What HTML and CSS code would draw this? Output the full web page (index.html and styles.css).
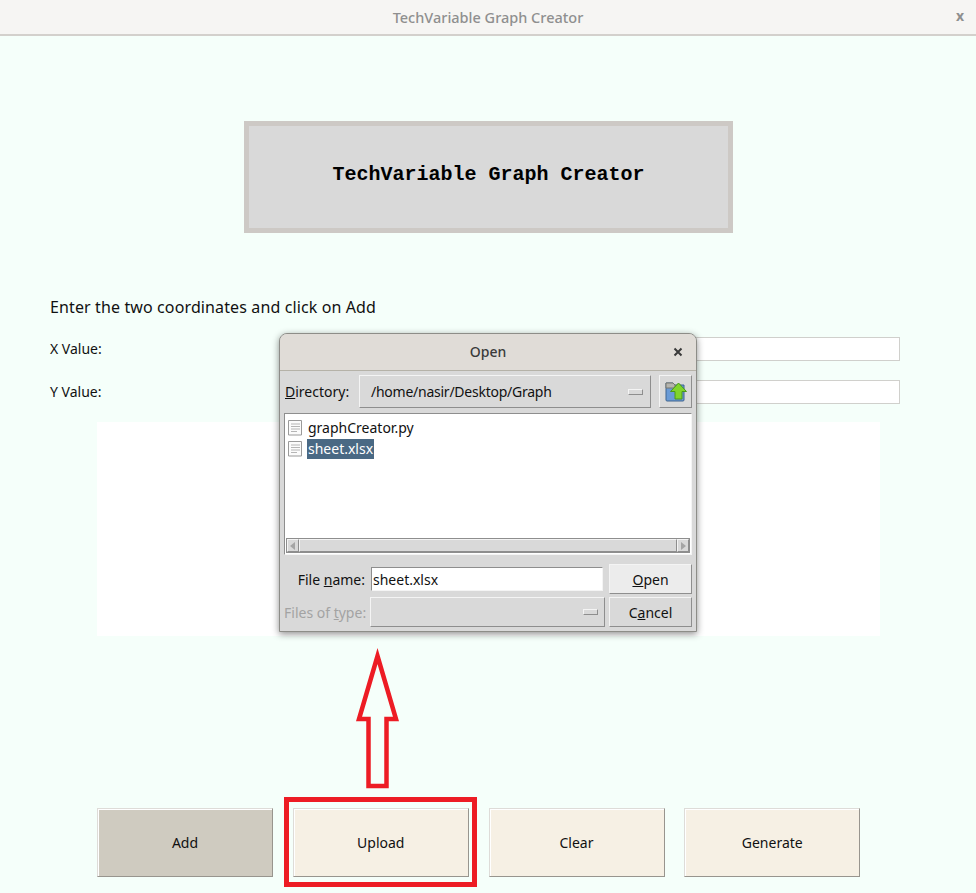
FILE: index.html
```html
<!DOCTYPE html>
<html lang="en">
<head>
    <meta charset="UTF-8">
    <meta name="viewport" content="width=device-width, initial-scale=1.0">
    <title>TechVariable Graph Creator</title>
    <link rel="stylesheet" href="styles.css">
</head>
<body>
    <div class="titlebar">
        <span class="titlebar-text">TechVariable Graph Creator</span>
        <span class="titlebar-close">x</span>
    </div>
    <div class="app">
        <div class="banner">TechVariable Graph Creator</div>
        <div class="prompt">Enter the two coordinates and click on Add</div>
        <div class="field">
            <label class="field-label">X Value:</label>
            <input class="field-input" type="text">
        </div>
        <div class="field">
            <label class="field-label">Y Value:</label>
            <input class="field-input" type="text">
        </div>
        <div class="preview"></div>
        <div class="actions">
            <button class="action action-active">Add</button>
            <button class="action">Upload</button>
            <button class="action">Clear</button>
            <button class="action">Generate</button>
        </div>
    </div>

    <!-- file dialog floats over the form -->
    <div class="dialog">
        <div class="dialog-title">
            <span>Open</span>
            <svg class="dialog-close" width="10" height="10" viewBox="0 0 10 10"><path d="M1.5 1.5L8.5 8.5M8.5 1.5L1.5 8.5" stroke="#3a3a3a" stroke-width="2"/></svg>
        </div>
        <div class="dialog-body">
            <div class="dir-row">
                <span class="dir-label"><u>D</u>irectory:</span>
                <div class="combo dir-combo">
                    <span class="dir-path">/home/nasir/Desktop/Graph</span>
                    <i class="combo-mark"></i>
                </div>
                <div class="up-button">
                    <svg width="22" height="20" viewBox="0 0 22 20">
                        <path d="M1 1h7l2 2h9v15a1 1 0 0 1-1 1H2a1 1 0 0 1-1-1z" fill="#6a9bd6" stroke="#3f648f"/>
                        <path d="M1 1h7l2 2v3H1z" fill="#b4b4ae" stroke="#77776f"/>
                        <path d="M13.500 1L21.500 9.500h-4.500v7.500h-7v-7.500H5.500z" fill="#80d42c" stroke="#4a9a18"/>
                    </svg>
                </div>
            </div>
            <div class="file-list">
                <div class="files">
                    <div class="file">
                        <svg width="15" height="16" viewBox="0 0 15 16"><path d="M.5.5h13v14.500h-13z" fill="#fbfbfb" stroke="#9a9a9a"/><path d="M3 4h9M3 6.500h9M3 9h9M3 11.500h6" stroke="#b5b5b5"/></svg>
                        <span class="file-name">graphCreator.py</span>
                    </div>
                    <div class="file">
                        <svg width="15" height="16" viewBox="0 0 15 16"><path d="M.5.5h13v14.500h-13z" fill="#fbfbfb" stroke="#9a9a9a"/><path d="M3 4h9M3 6.500h9M3 9h9M3 11.500h6" stroke="#b5b5b5"/></svg>
                        <span class="file-name file-selected">sheet.xlsx</span>
                    </div>
                </div>
                <div class="scrollbar">
                    <span class="scroll-arrow"><svg width="6" height="8" viewBox="0 0 6 8"><path d="M5 0v8L0 4z" fill="#a5a5a5"/></svg></span>
                    <span class="scroll-thumb"></span>
                    <span class="scroll-arrow"><svg width="6" height="8" viewBox="0 0 6 8"><path d="M1 0v8l5-4z" fill="#a5a5a5"/></svg></span>
                </div>
            </div>
            <div class="form-grid">
                <span class="form-label">File <u>n</u>ame:</span>
                <input class="name-input" type="text" value="sheet.xlsx">
                <button class="dialog-button dialog-button-hover"><u>O</u>pen</button>
                <span class="form-label form-label-off">Files of <u>t</u>ype:</span>
                <div class="combo type-combo"><i class="combo-mark"></i></div>
                <button class="dialog-button">C<u>a</u>ncel</button>
            </div>
        </div>
    </div>

    <!-- red annotations drawn on top of the screenshot -->
    <svg class="annotation" width="976" height="893" viewBox="0 0 976 893">
        <path d="M377.500 656L396 719H386.500V786H368.500V719H359z" fill="none" stroke="#ed1c24" stroke-width="4.500"/>
        <rect x="286.500" y="799.500" width="188" height="85" fill="none" stroke="#ed1c24" stroke-width="5"/>
    </svg>
</body>
</html>
```
FILE: styles.css
```css
* {
    box-sizing: border-box;
}
body {
    margin: 0;
    height: 893px;
    overflow: hidden;
    background-color: #f5fffa;
    font-family: "Noto Sans", sans-serif;
    color: #111;
}
.titlebar {
    display: flex;
    align-items: center;
    justify-content: center;
    position: relative;
    height: 36px;
    background-color: #f6f5f3;
    border-bottom: 2px solid #d3d0cc;
}
.titlebar-text {
    font-size: 14.500px;
    font-weight: 500;
    color: #8f8f8f;
}
.titlebar-close {
    position: absolute;
    right: 12px;
    top: 6px;
    font-size: 14px;
    font-weight: 700;
    color: #8f8f8f;
}
.app {
    display: flex;
    flex-direction: column;
    padding: 85px 76px 0 50px;
}
.banner {
    display: flex;
    align-items: center;
    justify-content: center;
    width: 489px;
    height: 112px;
    margin-left: 194px;
    padding-bottom: 6px;
    background-color: #d9d9d9;
    border: 5px solid #cdc9c5;
    font-family: "Liberation Mono", monospace;
    font-size: 20px;
    font-weight: 700;
    color: #000;
}
.prompt {
    margin-top: 63px;
    height: 22px;
    line-height: 22px;
    font-size: 16px;
    letter-spacing: 0.12px;
}
.field {
    display: flex;
    align-items: center;
    height: 24px;
    margin-top: 19px;
}
.field-label {
    width: 240px;
    padding-bottom: 2px;
    font-size: 14px;
}
.field-input {
    flex: 1;
    height: 24px;
    background-color: #fff;
    border: 1px solid #d0d0cc;
}
.preview {
    width: 783px;
    height: 214px;
    margin: 18px 0 0 47px;
    background-color: #fff;
}
.actions {
    display: flex;
    gap: 19.750px;
    margin: 172px 0 0 47px;
}
.action {
    width: 176px;
    height: 69px;
    padding: 0 0 1px;
    background-color: #f6f0e4;
    border: 1px solid;
    border-color: #dedcd8 #98958e #98958e #dedcd8;
    box-shadow: inset 1px 1px 0 #fff;
    font-family: inherit;
    font-size: 14px;
    color: #111;
}
.action-active {
    background-color: #cfcbc0;
}
.dialog {
    position: absolute;
    left: 279px;
    top: 333px;
    width: 418px;
    height: 299px;
    display: flex;
    flex-direction: column;
    border: 1px solid #8d8d88;
    border-radius: 8px 8px 0 0;
    background-color: #d9d9d9;
    box-shadow: 0 2px 7px rgba(0, 0, 0, 0.45);
    font-size: 14px;
    color: #111;
}
.dialog-title {
    display: flex;
    align-items: center;
    justify-content: center;
    position: relative;
    height: 37px;
    flex-shrink: 0;
    padding-bottom: 2px;
    background-color: #e0dcd7;
    border-bottom: 1px solid #b5b2a8;
    border-radius: 7px 7px 0 0;
    font-size: 14px;
    font-weight: 500;
    color: #3a3a3a;
}
.dialog-close {
    position: absolute;
    right: 13px;
    top: 13px;
}
.dialog-body {
    display: flex;
    flex-direction: column;
    padding: 4px 4px 0 4px;
}
.dir-row {
    display: flex;
    align-items: center;
    height: 33px;
}
.dir-label {
    width: 75px;
    padding-left: 1px;
}
.combo {
    display: flex;
    align-items: center;
    justify-content: space-between;
    background-color: #d9d9d9;
    border: 1px solid;
    border-color: #f4f4f4 #8e8e8e #8e8e8e #f4f4f4;
}
.dir-combo {
    width: 292px;
    height: 33px;
    padding: 0 7px 0 11px;
}
.dir-path {
    letter-spacing: -0.250px;
}
.combo-mark {
    display: block;
    width: 15px;
    height: 6px;
    background-color: #d9d9d9;
    border: 1px solid;
    border-color: #f4f4f4 #8e8e8e #8e8e8e #f4f4f4;
}
.up-button {
    display: flex;
    align-items: center;
    justify-content: center;
    width: 33px;
    height: 33px;
    margin-left: 8px;
    border: 1px solid;
    border-color: #f4f4f4 #8e8e8e #8e8e8e #f4f4f4;
}
.file-list {
    display: flex;
    flex-direction: column;
    justify-content: space-between;
    width: 408px;
    height: 142px;
    margin-top: 5px;
    background-color: #fff;
    border: 1px solid;
    border-color: #8e8e8e #f4f4f4 #f4f4f4 #8e8e8e;
}
.files {
    padding: 3px 0 0 3px;
}
.file {
    display: flex;
    align-items: center;
    gap: 4px;
    height: 21px;
}
.file-name {
    padding: 0 1px;
    line-height: 20px;
}
.file-selected {
    background-color: #4a6984;
    color: #fff;
}
.scrollbar {
    display: flex;
    height: 15px;
    margin: 0 1px 1px 1px;
    background-color: #d9d9d9;
    border: 1px solid #8e8e8e;
}
.scroll-arrow {
    display: flex;
    align-items: center;
    justify-content: center;
    width: 12px;
    border: 1px solid;
    border-color: #f4f4f4 #8e8e8e #8e8e8e #f4f4f4;
}
.scroll-thumb {
    flex: 1;
    border: 1px solid;
    border-color: #f4f4f4 #8e8e8e #8e8e8e #f4f4f4;
}
.form-grid {
    display: grid;
    grid-template-columns: 86px 235px 87px;
    grid-template-rows: 30px 30px;
    row-gap: 3px;
    align-items: center;
    margin-top: 9px;
}
.form-label {
    text-align: right;
    padding-right: 5px;
    white-space: nowrap;
}
.form-label-off {
    color: #a3a3a3;
}
.name-input {
    justify-self: end;
    width: 232px;
    height: 24px;
    margin-right: 2px;
    padding: 0 1px;
    border: 1px solid;
    border-color: #8e8e8e #f4f4f4 #f4f4f4 #8e8e8e;
    background-color: #fff;
    font-family: inherit;
    font-size: 14px;
    color: #111;
}
.type-combo {
    justify-content: flex-end;
    height: 30px;
    padding-right: 6px;
}
.dialog-button {
    justify-self: end;
    width: 83px;
    height: 30px;
    padding: 0;
    background-color: #d9d9d9;
    border: 1px solid;
    border-color: #f4f4f4 #8e8e8e #8e8e8e #f4f4f4;
    font-family: inherit;
    font-size: 14px;
    color: #111;
}
.dialog-button-hover {
    background-color: #ececec;
}
.annotation {
    position: absolute;
    left: 0;
    top: 0;
    pointer-events: none;
}
```
